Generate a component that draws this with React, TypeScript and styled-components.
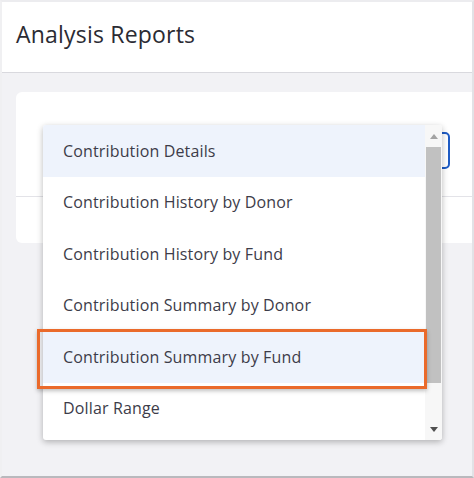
import React from 'react';
import styled, { createGlobalStyle } from 'styled-components';

const reports = [
    'Contribution Details',
    'Contribution History by Donor',
    'Contribution History by Fund',
    'Contribution Summary by Donor',
    'Contribution Summary by Fund',
    'Dollar Range'
];

const GlobalStyle = createGlobalStyle`
    body {
        margin: 0;
        font-family: "Open Sans", "Liberation Sans", sans-serif;
    }
`;

interface ItemProps {
    $active?: boolean;
}

const App = () => {
    return (
        <Frame>
            <GlobalStyle />
            <Header>
                <Title>Analysis Reports</Title>
            </Header>
            <Body>
                <Card>
                    <SelectRow>
                        <Select />
                    </SelectRow>
                    <CardFooter />
                </Card>
            </Body>
            <Dropdown>
                <List>
                    {reports.map((name, i) => (
                        <Item key={name} $active={i === 0 || i === 4}>{name}</Item>
                    ))}
                </List>
                <Scrollbar>
                    <Arrow $up />
                    <Thumb />
                    <Track />
                    <Arrow />
                </Scrollbar>
            </Dropdown>
            <Callout />
        </Frame>
    );
};

export default App;

const Frame = styled.div`
    position: relative;
    width: 474px;
    height: 478px;
    box-sizing: border-box;
    border-top: 2px solid #ececef;
    border-left: 2px solid #f0f0f2;
    border-right: 2px solid #e2e2e6;
    border-bottom: 2px solid #b9b9bd;
    background: #f2f2f5;
    overflow: hidden;
    display: flex;
    flex-direction: column;
`;

const Header = styled.div`
    height: 71px;
    box-sizing: border-box;
    background: #ffffff;
    border-bottom: 1px solid #d9d9de;
    display: flex;
    align-items: center;
    padding: 0 0 7px 14px;
`;

const Title = styled.h1`
    margin: 0;
    font-size: 23px;
    font-weight: 400;
    color: #2b2b33;
    letter-spacing: 0.2px;
`;

const Body = styled.div`
    flex: 1;
    padding: 19px 0 0 14px;
`;

const Card = styled.div`
    background: #ffffff;
    border-radius: 6px 0 0 6px;
    height: 151px;
    display: flex;
    flex-direction: column;
`;

const SelectRow = styled.div`
    height: 105px;
    padding: 40px 22px 0 40px;
    box-sizing: border-box;
    border-bottom: 1px solid #e3e3e8;
`;

const Select = styled.div`
    height: 37px;
    border: 2px solid #1f5cc4;
    border-radius: 5px;
    box-sizing: border-box;
`;

const CardFooter = styled.div`
    flex: 1;
`;

const Dropdown = styled.div`
    position: absolute;
    left: 41px;
    top: 123px;
    width: 399px;
    height: 315px;
    background: #ffffff;
    border-radius: 3px;
    box-shadow: 0 2px 6px rgba(0, 0, 0, 0.28);
    display: flex;
    overflow: hidden;
`;

const List = styled.ul`
    flex: 1;
    margin: 0;
    padding: 0;
    list-style: none;
`;

const Item = styled.li<ItemProps>`
    height: 51.5px;
    display: flex;
    align-items: center;
    padding-left: 20px;
    font-size: 16px;
    letter-spacing: 0.15px;
    color: #3d3c49;
    background: ${(p) => (p.$active ? '#eef3fc' : '#ffffff')};
`;

const Scrollbar = styled.div`
    width: 17px;
    background: #f7f7f7;
    display: flex;
    flex-direction: column;
    align-items: center;
`;

const Arrow = styled.div<{ $up?: boolean }>`
    height: 22px;
    width: 100%;
    display: flex;
    align-items: center;
    justify-content: center;

    &::before {
        content: '';
        border-left: 4px solid transparent;
        border-right: 4px solid transparent;
        ${(p) => (p.$up
            ? 'border-bottom: 5px solid #a3a3a3;'
            : 'border-top: 5px solid #505050;')}
    }
`;

const Thumb = styled.div`
    width: 15px;
    height: 236px;
    background: #c1c1c1;
`;

const Track = styled.div`
    flex: 1;
`;

const Callout = styled.div`
    position: absolute;
    left: 35px;
    top: 327px;
    width: 390px;
    height: 60px;
    box-sizing: border-box;
    border: 3px solid #ea6a2b;
    box-shadow: 0 2px 4px rgba(0, 0, 0, 0.25);
`;
